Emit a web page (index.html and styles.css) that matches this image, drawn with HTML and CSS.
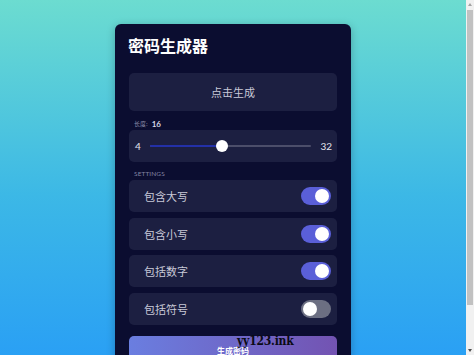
FILE: index.html
```html
<!DOCTYPE html>
<html lang="zh">
<head>
<meta charset="utf-8">
<title>密码生成器</title>
<link rel="stylesheet" href="styles.css">
</head>
<body>
<main class="card">
  <h1 class="title">密码生成器</h1>
  <div class="output">点击生成</div>
  <div class="len-label"><span class="len-key">长度:</span><span class="len-val">16</span></div>
  <div class="slider-box">
    <span class="num">4</span>
    <div class="track">
      <div class="fill" style="width: 44.5%"></div>
      <div class="thumb" style="left: 44.5%"></div>
    </div>
    <span class="num">32</span>
  </div>
  <div class="section">SETTINGS</div>
  <div class="settings">
    <div class="row"><span>包含大写</span><span class="toggle on"><span class="knob"></span></span></div>
    <div class="row"><span>包含小写</span><span class="toggle on"><span class="knob"></span></span></div>
    <div class="row"><span>包括数字</span><span class="toggle on"><span class="knob"></span></span></div>
    <div class="row"><span>包括符号</span><span class="toggle"><span class="knob"></span></span></div>
  </div>
  <button class="gen">生成密码</button>
  <div class="watermark">yy123.ink</div>
</main>
<div class="scrollbar">
  <span class="arrow up"></span>
  <div class="sb-track"><div class="sb-thumb"></div></div>
  <span class="arrow down"></span>
</div>
</body>
</html>
```
FILE: styles.css
```css
html {
  height: 100%;
}
body {
  margin: 0;
  min-height: 403px;
  background: linear-gradient(180deg, #6cdcd0 0%, #3cb8e6 55%, #2aa0f4 100%);
  background-attachment: fixed;
  font-family: Lato, "Noto Sans CJK SC", sans-serif;
  display: flex;
  justify-content: center;
  align-items: flex-start;
  padding: 24px 8px 0 0;
  box-sizing: border-box;
}
.card {
  position: relative;
  width: 236px;
  box-sizing: border-box;
  background: #0b0d30;
  border-radius: 6px;
  padding: 9px 14px 20px 14px;
  box-shadow: 0 2px 8px rgba(0, 0, 0, 0.25);
}
.title {
  margin: 0 0 16px -1px;
  font-family: "Noto Sans CJK SC", sans-serif;
  font-weight: 700;
  font-size: 16px;
  line-height: 24px;
  color: #ffffff;
}
.output {
  height: 38px;
  background: #1c1f41;
  border-radius: 5px;
  display: flex;
  align-items: center;
  justify-content: center;
  font-family: "Noto Sans CJK SC", sans-serif;
  font-size: 11px;
  color: #c9cad8;
}
.len-label {
  margin-top: 7px;
  height: 12px;
  line-height: 12px;
  padding-left: 5px;
  display: flex;
  align-items: center;
  gap: 4px;
}
.len-key {
  font-family: "Noto Sans CJK SC", sans-serif;
  font-size: 6px;
  color: #8a8ca8;
}
.len-val {
  font-size: 8px;
  font-weight: 700;
  color: #d6d7e6;
}
.slider-box {
  height: 32px;
  background: #1c1f41;
  border-radius: 5px;
  display: flex;
  align-items: center;
  padding: 0 5px 0 6px;
  gap: 9px;
}
.num {
  font-size: 10px;
  color: #e2e3ee;
}
.track {
  position: relative;
  flex: 1;
  height: 2px;
  background: #4c4e6a;
  border-radius: 1px;
}
.fill {
  position: absolute;
  left: 0;
  top: 0;
  height: 2px;
  background: #2330a8;
  border-radius: 1px;
}
.thumb {
  position: absolute;
  top: -5px;
  width: 12px;
  height: 12px;
  margin-left: -6px;
  border-radius: 50%;
  background: #ffffff;
}
.section {
  margin-top: 6px;
  padding-left: 5px;
  height: 11px;
  line-height: 11px;
  font-size: 6.5px;
  color: #8284a2;
  letter-spacing: 0.1px;
}
.settings {
  margin-top: 1px;
  display: flex;
  flex-direction: column;
  gap: 5.5px;
}
.row {
  height: 32px;
  background: #1c1f41;
  border-radius: 5px;
  display: flex;
  align-items: center;
  justify-content: space-between;
  padding: 0 6px 0 15px;
  font-family: "Noto Sans CJK SC", sans-serif;
  font-size: 11px;
  color: #c9cad8;
}
.toggle {
  width: 30px;
  height: 18px;
  border-radius: 9px;
  background: #6c6f82;
  display: flex;
  align-items: center;
  padding: 0 2px;
  box-sizing: border-box;
  justify-content: flex-start;
}
.toggle.on {
  background: #5a5fd8;
  justify-content: flex-end;
}
.knob {
  width: 14px;
  height: 14px;
  border-radius: 50%;
  background: #ffffff;
}
.gen {
  display: block;
  width: 100%;
  margin-top: 11px;
  height: 38px;
  box-sizing: border-box;
  border: 0;
  border-radius: 5px;
  background: linear-gradient(90deg, #6a7ee0 0%, #7353b2 100%);
  color: #ffffff;
  font-family: "Noto Sans CJK SC", sans-serif;
  font-weight: 700;
  font-size: 8px;
  line-height: 12px;
  padding: 0 0 8px 0;
}
.watermark {
  position: absolute;
  left: 122px;
  top: 310px;
  font-family: "DejaVu Serif", serif;
  font-weight: 700;
  font-stretch: condensed;
  font-size: 12px;
  color: #0a0a14;
  letter-spacing: -0.2px;
}
.scrollbar {
  position: fixed;
  top: 0;
  right: 0;
  bottom: 0;
  width: 8px;
  background: #f1f1f1;
  display: flex;
  flex-direction: column;
  align-items: center;
}
.arrow {
  width: 0;
  height: 0;
  border-left: 2.5px solid transparent;
  border-right: 2.5px solid transparent;
  margin: 3px 0;
}
.arrow.up {
  border-bottom: 3px solid #a3a3a3;
}
.arrow.down {
  border-top: 3px solid #505050;
}
.sb-track {
  flex: 1;
  width: 100%;
  padding-top: 1px;
}
.sb-thumb {
  width: 6px;
  margin: 0 auto;
  height: 295px;
  background: #c1c1c1;
}
```
